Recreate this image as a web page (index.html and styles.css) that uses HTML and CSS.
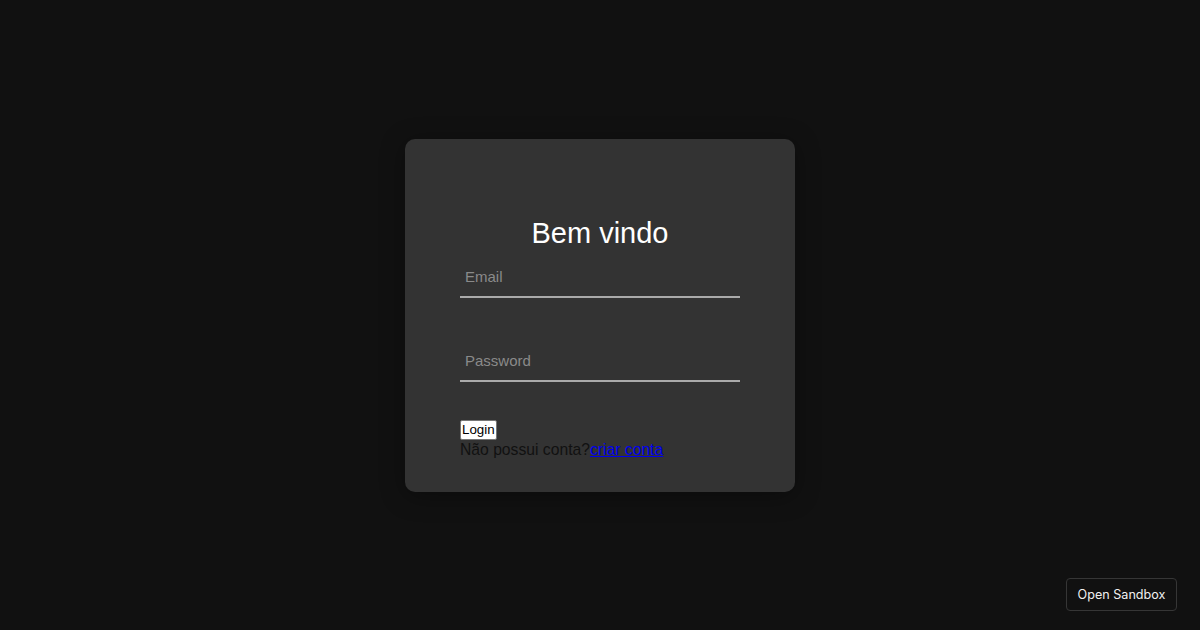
FILE: index.html
```html
<!DOCTYPE html>
<html lang="pt">
<head>
<meta charset="utf-8">
<title>Login</title>
<link rel="stylesheet" href="styles.css">
</head>
<body>
<main class="page">
  <form class="card">
    <h1 class="title">Bem vindo</h1>
    <input class="field field-email" type="email" placeholder="Email">
    <input class="field field-pass" type="password" placeholder="Password">
    <button class="login" type="button">Login</button>
    <p class="signup">Não possui conta?<a href="#">criar conta</a></p>
  </form>
</main>
<button class="sandbox" type="button">Open Sandbox</button>
</body>
</html>
```
FILE: styles.css
```css
html, body {
  margin: 0;
  padding: 0;
  background: #111111;
  font-family: "Liberation Sans", Arial, sans-serif;
}
.page {
  min-height: 100vh;
  display: flex;
  align-items: center;
  justify-content: center;
}
.card {
  width: 280px;
  padding: 77px 55px 33px;
  background: #333333;
  border-radius: 10px;
  box-shadow: 0 4px 24px rgba(0, 0, 0, 0.35);
  display: flex;
  flex-direction: column;
  align-items: flex-start;
}
.title {
  align-self: stretch;
  margin: 0;
  text-align: center;
  font-weight: normal;
  font-size: 29px;
  line-height: 34px;
  color: #ffffff;
}
.field {
  box-sizing: border-box;
  width: 280px;
  height: 40px;
  padding: 10px 5px 10px;
  background: transparent;
  border: none;
  border-bottom: 2px solid #aaaaaa;
  outline: none;
  font-family: "Liberation Sans", Arial, sans-serif;
  font-size: 15px;
  color: #ffffff;
}
.field::placeholder {
  color: #8a8a8a;
}
.field-email {
  margin-top: 8px;
}
.field-pass {
  margin-top: 44px;
}
.login {
  margin-top: 38px;
  height: 20px;
  padding: 1px 1px;
  font-family: "Liberation Sans", Arial, sans-serif;
  font-size: 13.33px;
  color: #000;
  background: #ffffff;
  border: 1px solid #767676;
  border-radius: 2px;
}
.signup {
  margin: 1px 0 0;
  font-size: 15.7px;
  line-height: 18px;
  color: #111111;
}
.signup a {
  color: #0000ee;
  text-decoration: underline;
}
.sandbox {
  position: fixed;
  right: 23px;
  bottom: 19px;
  width: 111px;
  height: 33px;
  padding: 0;
  background: #111111;
  color: #f0f0f0;
  border: 1px solid #363636;
  border-radius: 4px;
  font-family: Inter, "Liberation Sans", sans-serif;
  font-size: 12.6px;
}
```
